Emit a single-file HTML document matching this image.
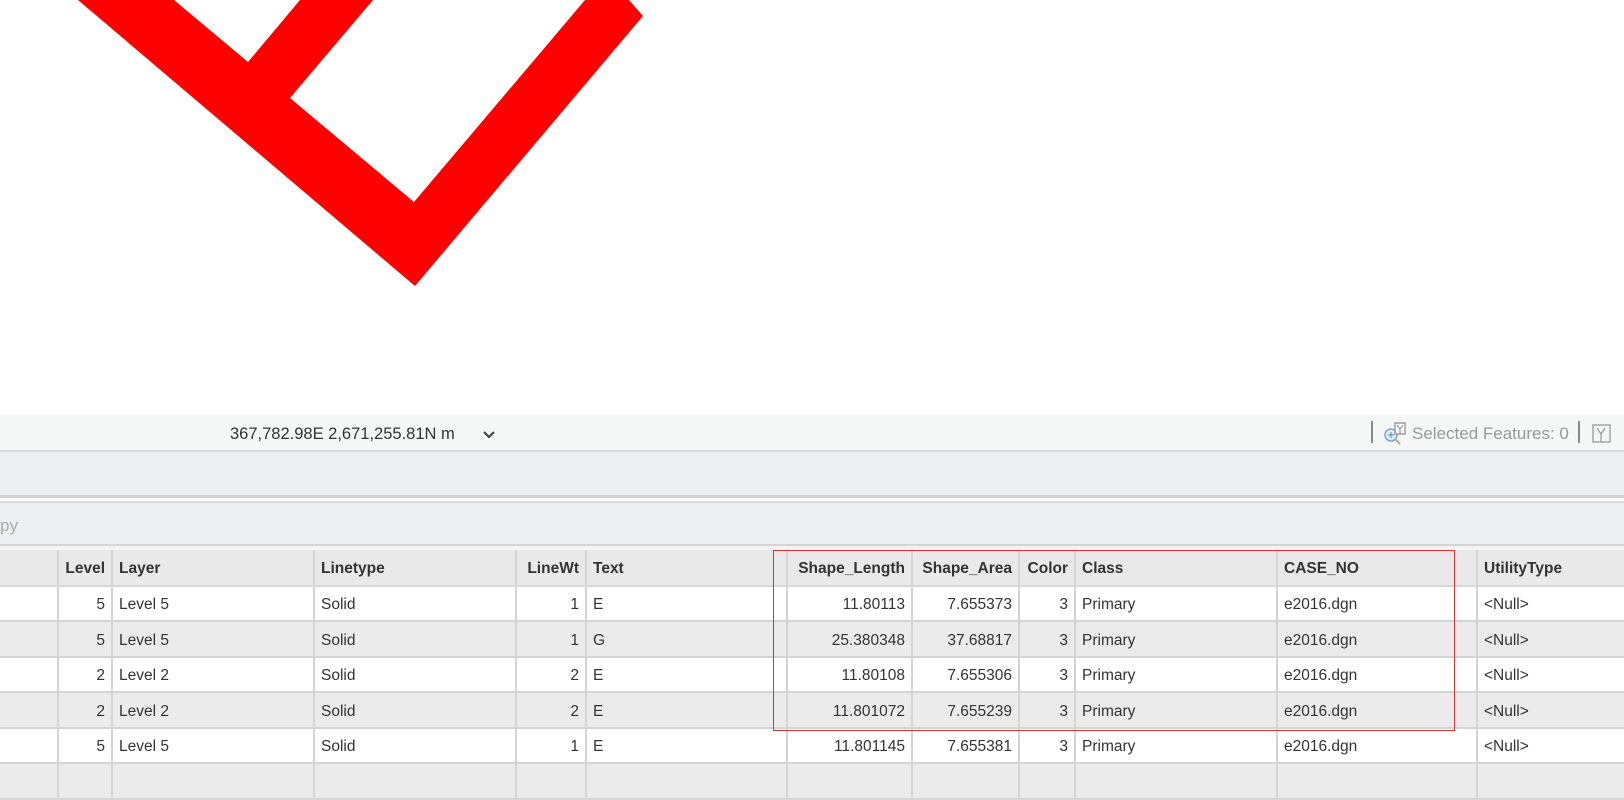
<!DOCTYPE html>
<html><head><meta charset="utf-8"><style>
*{margin:0;padding:0;box-sizing:border-box}
body{width:1624px;height:771px;overflow:hidden;background:#fff;font-family:"Liberation Sans",sans-serif;position:relative;color:#333}
.abs{position:absolute}
table{position:absolute;left:0;top:550px;width:1700px;border-collapse:collapse;table-layout:fixed;font-size:15.5px}
td,th{height:35.5px;border-right:2px solid #d4d4d4;border-bottom:2px solid #d4d4d4;padding:4px 6px 0 6px;white-space:nowrap;overflow:hidden;text-align:left}
th{background:#e9e9e9;font-weight:bold;color:#333;border-bottom:2px solid #d8d8d8}
td.r,th.r{text-align:right}
tr.a td{background:#fff}
tr.b td{background:#ebebeb}
</style></head><body>
<svg class="abs" style="left:0;top:0" width="700" height="300"><polygon fill="#ff0000" points="78,0 415,286 643,16 629,0 585,0 414,202 290,98 373,0 300,0 248,62 174,0"/></svg>
<div class="abs" style="left:0;top:415px;width:1624px;height:37px;background:#f5f6f6;border-bottom:2px solid #dcdcdc"></div>
<div class="abs" style="left:230px;top:425px;font-size:16.5px;color:#333">367,782.98E 2,671,255.81N m</div>
<svg class="abs" style="left:482px;top:429px" width="14" height="12"><path d="M2 3 L7 8 L12 3" stroke="#444" stroke-width="2.2" fill="none"/></svg>
<div class="abs" style="left:1371px;top:421px;width:2px;height:22px;background:#888"></div>
<svg class="abs" style="left:1382px;top:420px" width="28" height="28"><circle cx="9" cy="15" r="6" fill="#dfeaf4" stroke="#6a9cc6" stroke-width="1.3"/><path d="M6 15h6M9 12v6" stroke="#6a9cc6" stroke-width="1.2"/><path d="M13 19l5 5" stroke="#c9a070" stroke-width="2"/><rect x="13" y="3" width="10" height="11" fill="#fff" stroke="#888" stroke-width="1.2"/><path d="M15 5l3 4 3-4M18 9v5" stroke="#888" fill="none" stroke-width="1"/></svg>
<div class="abs" style="left:1412px;top:424px;font-size:17px;color:#999">Selected Features: 0</div>
<div class="abs" style="left:1578px;top:421px;width:2px;height:22px;background:#888"></div>
<svg class="abs" style="left:1592px;top:424px" width="20" height="20"><rect x="1" y="1" width="17" height="17" fill="none" stroke="#999" stroke-width="1.3"/><path d="M5 4l4 6 4-6M9 10v8" stroke="#999" fill="none" stroke-width="1.2"/></svg>
<div class="abs" style="left:0;top:452px;width:1624px;height:43px;background:#eeeff0"></div>
<div class="abs" style="left:0;top:495px;width:1624px;height:3px;background:#d2d2d2"></div>
<div class="abs" style="left:0;top:501px;width:1624px;height:2px;background:#dcdcdc"></div>
<div class="abs" style="left:0;top:503px;width:1624px;height:43px;background:#eeeff0;border-bottom:2px solid #d4d4d4"></div>
<div class="abs" style="left:0;top:516px;font-size:17px;color:#aaa">py</div>
<div class="abs" style="left:0;top:546px;width:1624px;height:4px;background:#f4f4f4"></div>
<table>
<colgroup><col style="width:58px"><col style="width:54px"><col style="width:202px"><col style="width:202px"><col style="width:70px"><col style="width:201px"><col style="width:125px"><col style="width:107px"><col style="width:56px"><col style="width:202px"><col style="width:200px"><col style="width:223px"></colgroup>
<tr><th></th><th class="r">Level</th><th>Layer</th><th>Linetype</th><th class="r">LineWt</th><th>Text</th><th class="r">Shape_Length</th><th class="r">Shape_Area</th><th class="r">Color</th><th>Class</th><th>CASE_NO</th><th>UtilityType</th></tr>
<tr class="a"><td></td><td class="r">5</td><td>Level 5</td><td>Solid</td><td class="r">1</td><td>E</td><td class="r">11.80113</td><td class="r">7.655373</td><td class="r">3</td><td>Primary</td><td>e2016.dgn</td><td>&lt;Null&gt;</td></tr>
<tr class="b"><td></td><td class="r">5</td><td>Level 5</td><td>Solid</td><td class="r">1</td><td>G</td><td class="r">25.380348</td><td class="r">37.68817</td><td class="r">3</td><td>Primary</td><td>e2016.dgn</td><td>&lt;Null&gt;</td></tr>
<tr class="a"><td></td><td class="r">2</td><td>Level 2</td><td>Solid</td><td class="r">2</td><td>E</td><td class="r">11.80108</td><td class="r">7.655306</td><td class="r">3</td><td>Primary</td><td>e2016.dgn</td><td>&lt;Null&gt;</td></tr>
<tr class="b"><td></td><td class="r">2</td><td>Level 2</td><td>Solid</td><td class="r">2</td><td>E</td><td class="r">11.801072</td><td class="r">7.655239</td><td class="r">3</td><td>Primary</td><td>e2016.dgn</td><td>&lt;Null&gt;</td></tr>
<tr class="a"><td></td><td class="r">5</td><td>Level 5</td><td>Solid</td><td class="r">1</td><td>E</td><td class="r">11.801145</td><td class="r">7.655381</td><td class="r">3</td><td>Primary</td><td>e2016.dgn</td><td>&lt;Null&gt;</td></tr>
<tr class="b"><td></td><td></td><td></td><td></td><td></td><td></td><td></td><td></td><td></td><td></td><td></td><td></td></tr>
</table>
<div class="abs" style="left:773px;top:550px;width:682px;height:181px;border:1.5px solid #e03030"></div>
</body></html>
